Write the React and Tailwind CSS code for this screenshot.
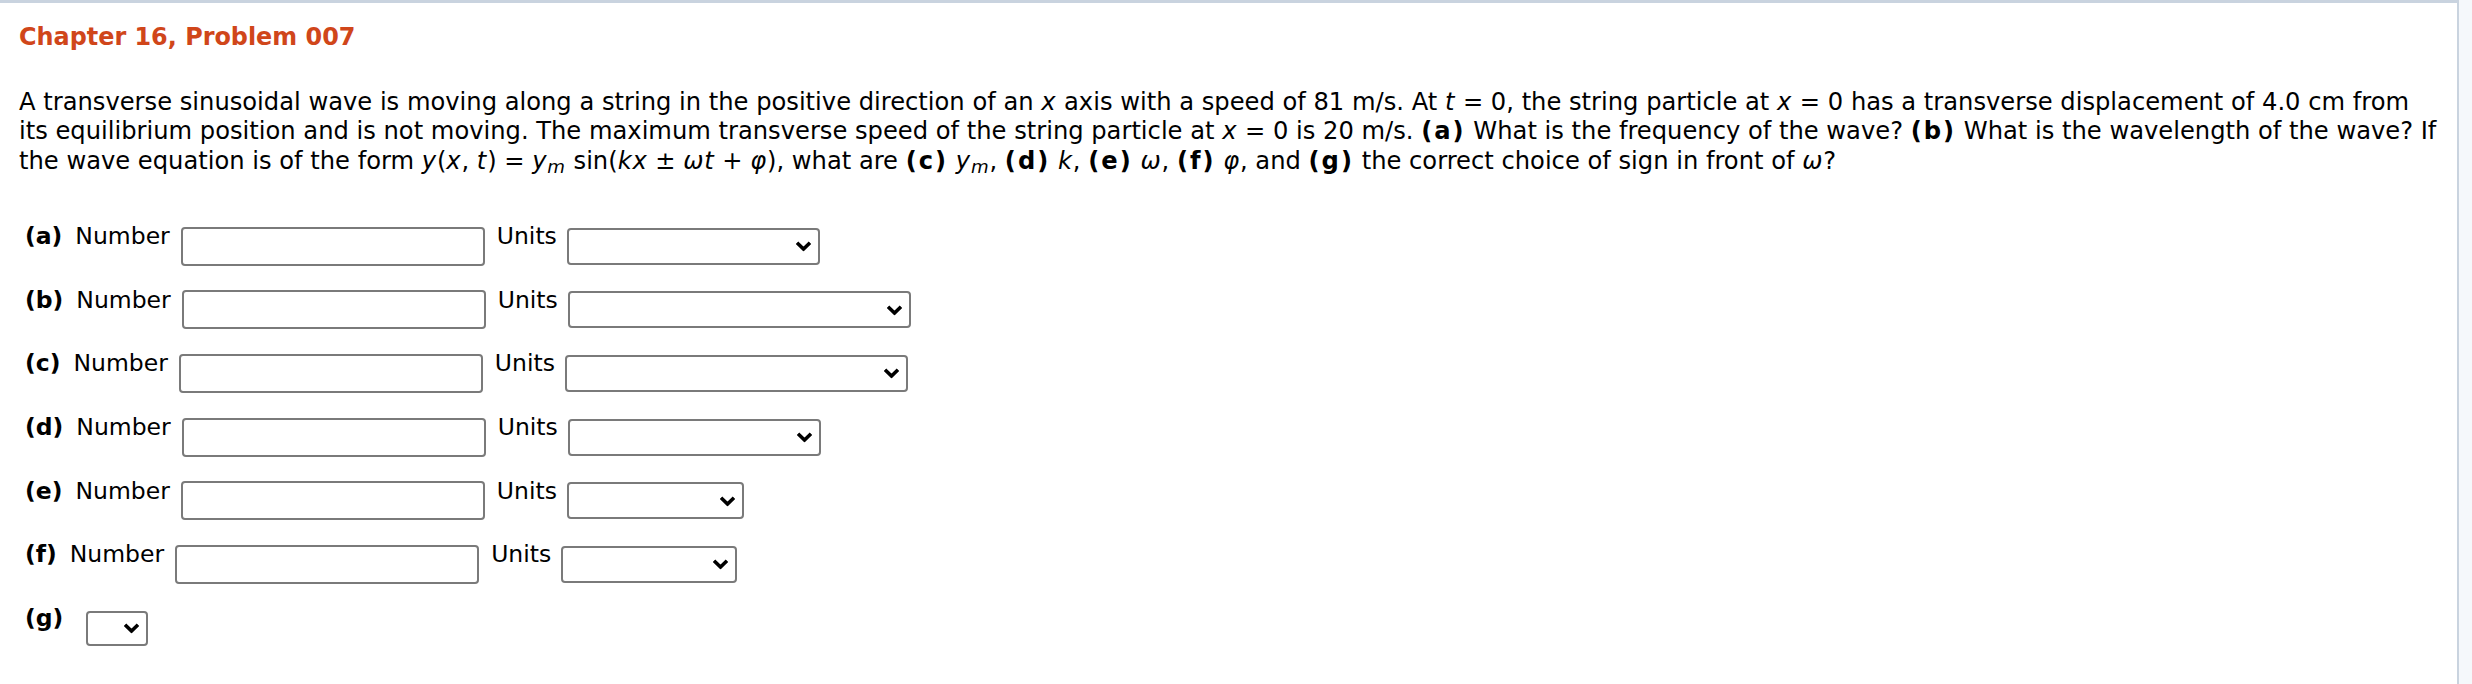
import React from "react";

function Chevron() {
    return (
        <svg
            width="17"
            height="11"
            viewBox="0 0 17 11"
            className="pointer-events-none absolute right-[8px] top-1/2 -translate-y-1/2"
        >
            <path d="M2 2.2 L8.5 8.5 L15 2.2" fill="none" stroke="#000" strokeWidth="3.6" />
        </svg>
    );
}

function UnitSelect({ className }) {
    return (
        <div className={"relative " + className}>
            <select
                defaultValue=""
                className="h-full w-full appearance-none rounded-[4px] border-2 border-[#7a7a7a] bg-white"
            >
                <option value=""></option>
            </select>
            <Chevron />
        </div>
    );
}

// bold / italic bits inside the problem text
const B = ({ children }) => <b className="tracking-[2px]">{children}</b>;
const I = ({ children }) => <i className="tracking-[0.8px]">{children}</i>;

const rows = [
    { key: "a", sel: "w-[253px]" },
    { key: "b", sel: "w-[343px]" },
    { key: "c", sel: "w-[343px]" },
    { key: "d", sel: "w-[253px]" },
    { key: "e", sel: "w-[177px]" },
    { key: "f", sel: "w-[176px]" },
];

function App() {
    return (
        <div className="min-h-[684px] w-full bg-[#f5f8fb] font-['DejaVu_Sans',sans-serif] text-black">
            <div className="min-h-[684px] w-[2459px] border-t-[3px] border-r-2 border-[#c9d3df] bg-white pl-[19px] pt-[20px]">
                <h2 className="text-[23.9px] font-bold leading-[29.5px] text-[#d0461a]">
                    Chapter 16, Problem 007
                </h2>

                <p className="mt-[35px] whitespace-nowrap text-[24.2px] leading-[29.5px]">
                    A transverse sinusoidal wave is moving along a string in the positive direction of an <I>x</I> axis with a speed of 81 m/s. At <I>t</I> = 0, the string particle at <I>x</I> = 0 has a transverse displacement of 4.0 cm from
                    <br />
                    its equilibrium position and is not moving. The maximum transverse speed of the string particle at <I>x</I> = 0 is 20 m/s. <B>(a)</B> What is the frequency of the wave? <B>(b)</B> What is the wavelength of the wave? If
                    <br />
                    the wave equation is of the form <I>y</I>(<I>x</I>, <I>t</I>) = <I>y</I><sub><I>m</I></sub> sin(<I>kx</I> ± <I>ωt</I> + <I>φ</I>), what are <B>(c)</B> <I>y</I><sub><I>m</I></sub>, <B>(d)</B> <I>k</I>, <B>(e)</B> <I>ω</I>, <B>(f)</B> <I>φ</I>, and <B>(g)</B> the correct choice of sign in front of <I>ω</I>?
                </p>

                <div className="mt-[46px] flex flex-col gap-[19.7px] text-[23.5px] leading-[29.5px]">
                    {rows.map((r) => (
                        <div key={r.key} className="flex h-[44px] items-start pl-[6px]">
                            <span className="font-bold">({r.key})</span>
                            <span className="ml-[13px]">Number</span>
                            <input
                                type="text"
                                className="ml-[11px] mt-[4.5px] h-[39px] w-[304px] rounded-[4px] border-2 border-[#7a7a7a] bg-white"
                            />
                            <span className="ml-[12px]">Units</span>
                            <UnitSelect className={"ml-[10px] mt-[5.5px] h-[37px] " + r.sel} />
                        </div>
                    ))}
                    <div className="flex h-[44px] items-start pl-[6px]">
                        <span className="font-bold">(g)</span>
                        <UnitSelect className="ml-[23px] mt-[6.5px] h-[35px] w-[62px]" />
                    </div>
                </div>
            </div>
        </div>
    );
}

export default App;
